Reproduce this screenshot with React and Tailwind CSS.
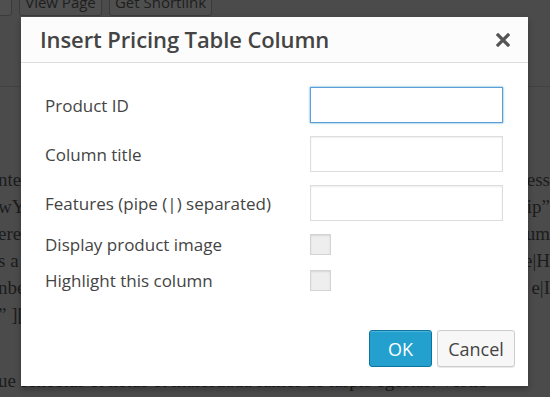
import React from "react";

const sans = { fontFamily: '"Open Sans", "Noto Sans", sans-serif' };

function Row({ label, children, className = "" }) {
  return (
    <div className={`flex items-center ${className}`}>
      <div className="w-[265px] text-[17px] text-[#444] leading-none">{label}</div>
      {children}
    </div>
  );
}

function TextInput({ focused }) {
  return (
    <div
      className={
        focused
          ? "w-[193px] h-[36px] bg-white border border-[#5b9dd9] shadow-[0_0_2px_rgba(30,140,190,0.8)]"
          : "w-[193px] h-[36px] bg-white border border-[#dddddd] shadow-[inset_0_1px_2px_rgba(0,0,0,0.07)]"
      }
    />
  );
}

function Checkbox() {
  return (
    <div className="w-[21px] h-[21px] border border-[#d4d4d4] bg-[#eeeeee] shadow-[inset_0_1px_2px_rgba(0,0,0,0.1)]" />
  );
}

function BgLine({ left, right, className = "" }) {
  return (
    <div className={`flex justify-between h-[27px] items-center whitespace-nowrap ${className}`}>
      <span className="-ml-[2px]">{left}</span>
      <span>{right}</span>
    </div>
  );
}

export default function App() {
  return (
    <div className="relative w-[550px] h-[397px] overflow-hidden bg-[#4b4b4b]" style={sans}>
      {/* background page (dimmed) */}
      <div className="flex flex-col">
        <div className="flex -mt-[12px] h-[29px] gap-[7px] -ml-[30px]">
          <div className="h-[28px] w-[42px] rounded-[3px] border border-[#3b3b3b] bg-[#4f4f4f]" />
          <div className="h-[28px] w-[83px] rounded-[3px] border border-[#3b3b3b] bg-[#4f4f4f] flex items-center justify-center text-[15px] text-[#1e1e1e]">
            View Page
          </div>
          <div className="h-[28px] w-[103px] rounded-[3px] border border-[#3b3b3b] bg-[#4f4f4f] flex items-center justify-center text-[15px] text-[#1e1e1e]">
            Get Shortlink
          </div>
        </div>
        <div className="h-[70px] border-b border-[#424242]" />
        <div
          className="mt-[80px] text-[19px] text-[#1c1c1c]"
          style={{ fontFamily: '"Liberation Serif", "DejaVu Serif", serif' }}
        >
          <BgLine left="nte" right="ess" />
          <BgLine left="wY" right="ip”" />
          <BgLine left="ere" right="lum" />
          <BgLine left="s a" right="e|H" />
          <BgLine left="nbe" right="e|I" />
          <BgLine left="” ][" right="" />
          <div className="mt-[39px] h-[27px] flex items-center whitespace-nowrap -ml-[2px]">
            ue senectus et netus et malesuada fames ac turpis egestas. Vestib
          </div>
          <div className="h-[27px] flex items-center whitespace-nowrap pl-[60px]">
            tum tortor quam, feugiat vitae, ultricies eget, tempor sit amet
          </div>
        </div>
      </div>

      {/* modal */}
      <div className="absolute left-[21px] top-[17px] w-[507px] h-[369px] bg-white shadow-[0_3px_6px_rgba(0,0,0,0.3)] flex flex-col">
        <div className="h-[46px] bg-[#fcfcfc] border-b border-[#dddddd] flex items-center justify-between pl-[19px] pr-[18px]">
          <div className="text-[22px] font-semibold text-[#444] tracking-[-0.1px]">
            Insert Pricing Table Column
          </div>
          <svg width="14" height="14" viewBox="0 0 14 14">
            <path d="M2 2 L12 12 M12 2 L2 12" stroke="#555" strokeWidth="3.2" strokeLinecap="square" />
          </svg>
        </div>
        <div className="flex flex-col pl-[24px] pt-[24px]">
          <Row label="Product ID">
            <TextInput focused />
          </Row>
          <Row label="Column title" className="mt-[13px]">
            <TextInput />
          </Row>
          <Row label="Features (pipe (|) separated)" className="mt-[13px]">
            <TextInput />
          </Row>
          <Row label="Display product image" className="mt-[13px]">
            <Checkbox />
          </Row>
          <Row label="Highlight this column" className="mt-[15px]">
            <Checkbox />
          </Row>
        </div>
        <div className="flex justify-end gap-[5px] pr-[13px] mt-[39px]">
          <button className="w-[63px] h-[37px] rounded-[3px] bg-[#24a0cf] border border-[#0a73a0] shadow-[inset_0_1px_0_rgba(120,200,230,0.5)] text-white text-[18px] leading-none">
            OK
          </button>
          <button className="w-[78px] h-[37px] rounded-[3px] bg-[#f7f7f7] border border-[#cccccc] shadow-[0_1px_0_rgba(0,0,0,0.08)] text-[#444] text-[18px] leading-none">
            Cancel
          </button>
        </div>
      </div>
    </div>
  );
}
